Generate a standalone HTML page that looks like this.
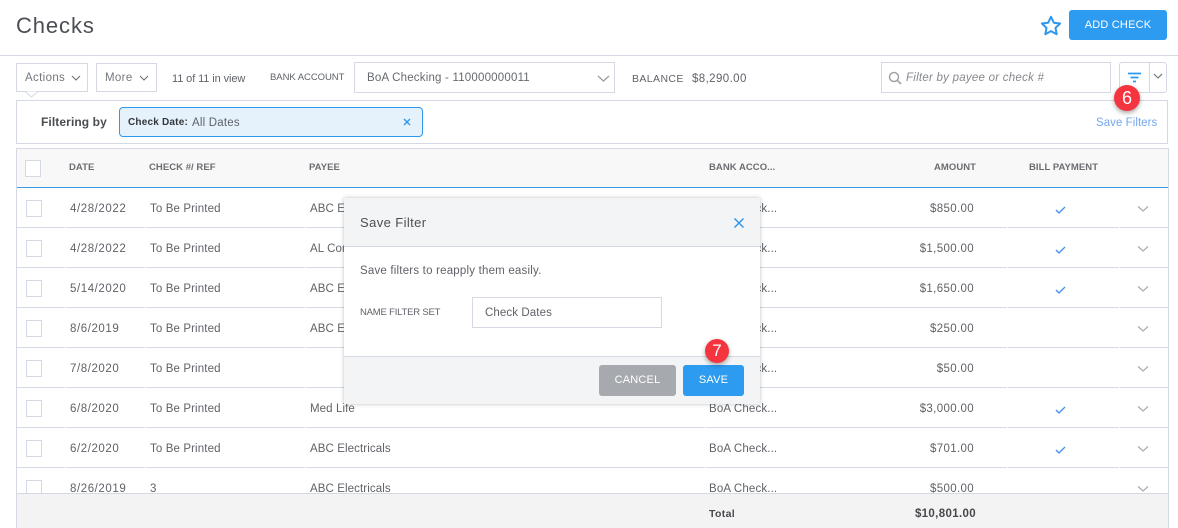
<!DOCTYPE html>
<html><head><meta charset="utf-8"><style>
html,body{margin:0;padding:0;background:#fff}
#p{position:relative;width:1178px;height:528px;overflow:hidden;background:#fff;font-family:"Liberation Sans",sans-serif;font-size:11.5px;letter-spacing:.12px;color:#5f6268}
#p div,#p span.t,#p svg{position:absolute}
.t{position:absolute;white-space:nowrap;line-height:14px}
.b{box-sizing:border-box;border:1px solid #d4d9e3;background:#fff}
.h{font-weight:bold;font-size:9.5px;color:#6b6d72;letter-spacing:.05px}
.r{text-align:right}
.d{letter-spacing:.57px}
.a{letter-spacing:.35px;text-align:right;left:874px;width:100px}
.k{left:709px;letter-spacing:.15px}
.p{left:310px;letter-spacing:.1px}
.l{left:17px;width:1151px;height:1px;background:#d6dae5}
.g{top:188px;width:1px;height:305px;background:#fff}
.c{left:26px;width:16px;height:17px;box-sizing:border-box;border:1px solid #d4d9e3;background:#fff}
.btn{box-sizing:border-box;border-radius:3px;color:#fff;text-align:center;font-size:11px;letter-spacing:.2px}
</style></head><body><div id="p">
<span class="t" style="left:16px;top:13px;font-size:22px;line-height:26px;letter-spacing:.9px;color:#4b4e54">Checks</span>
<svg style="left:1040px;top:15px" width="22" height="21" viewBox="0 0 22 21"><path d="M11 1.800l2.800 5.900 6.300.8-4.600 4.400 1.200 6.300-5.700-3.100-5.700 3.100 1.200-6.300L1.900 8.500l6.300-.8z" fill="none" stroke="#2d98ee" stroke-width="2" stroke-linejoin="round"/></svg>
<div class="btn" style="left:1069px;top:10px;width:98px;height:30px;background:#2d9bf0;line-height:30px">ADD CHECK</div>
<div style="left:0;top:55px;width:1178px;height:1px;background:#d6dae3"></div>

<div class="b" style="left:16px;top:63px;width:72px;height:29px"></div>
<span class="t" style="left:25px;top:71px;color:#74777c;letter-spacing:.35px">Actions</span>
<svg style="left:71px;top:74px" width="10" height="8"><path d="M1 2l4 4 4-4" fill="none" stroke="#6d7076" stroke-width="1.100"/></svg>
<svg style="left:25px;top:91px" width="13" height="7"><path d="M0 .5l6.500 5.500L13 .5" fill="#fff" stroke="#d4d9e3"/></svg>
<div class="b" style="left:96px;top:63px;width:61px;height:29px"></div>
<span class="t" style="left:105px;top:71px;color:#74777c;letter-spacing:.35px">More</span>
<svg style="left:139px;top:74px" width="10" height="8"><path d="M1 2l4 4 4-4" fill="none" stroke="#6d7076" stroke-width="1.100"/></svg>
<span class="t" style="left:172px;top:72px;font-size:11px;letter-spacing:-.1px">11 of 11 in view</span>
<span class="t" style="left:270px;top:71px;font-size:9.5px;letter-spacing:-.05px">BANK ACCOUNT</span>
<div class="b" style="left:354px;top:62px;width:261px;height:31px"></div>
<span class="t" style="left:367px;top:71px;color:#66696f;letter-spacing:.2px">BoA Checking - 110000000011</span>
<svg style="left:597px;top:74px" width="13" height="9"><path d="M1 2l5.500 5L12 2" fill="none" stroke="#9a9da3" stroke-width="1.300"/></svg>
<span class="t" style="left:632px;top:72px;font-size:10.5px;letter-spacing:.4px">BALANCE</span>
<span class="t" style="left:692px;top:72px;letter-spacing:.4px">$8,290.00</span>
<div class="b" style="left:881px;top:62px;width:230px;height:31px"></div>
<svg style="left:888px;top:71px" width="14" height="14"><circle cx="6" cy="6" r="4.500" fill="none" stroke="#a0a3a8" stroke-width="1.500"/><path d="M9.500 9.500L13 13" stroke="#a0a3a8" stroke-width="1.600"/></svg>
<span class="t" style="left:906px;top:71px;font-style:italic;color:#85888d;letter-spacing:.25px">Filter by payee or check #</span>
<div class="b" style="left:1119px;top:62px;width:48px;height:31px;border-radius:3px"></div>
<div style="left:1149px;top:63px;width:1px;height:29px;background:#d4d9e3"></div>
<svg style="left:1128px;top:72px" width="13" height="11"><path d="M0 1.500h13M2.500 5.500h8M5 9.500h3" stroke="#2d98ee" stroke-width="1.700"/></svg>
<svg style="left:1153px;top:73px" width="10" height="7"><path d="M1 1l4 4 4-4" fill="none" stroke="#6d7076" stroke-width="1.100"/></svg>

<div class="b" style="left:16px;top:100px;width:1152px;height:44px"></div>
<span class="t" style="left:41px;top:115px;font-weight:bold;font-size:12px;color:#4a4d52;letter-spacing:.1px">Filtering by</span>
<div style="left:119px;top:107px;width:304px;height:30px;box-sizing:border-box;border:1px solid #2d98ee;border-radius:4px;background:#e5f2fc"></div>
<span class="t" style="left:128px;top:116px;font-weight:bold;font-size:10px;color:#33363b;letter-spacing:.2px">Check Date:</span>
<span class="t" style="left:192px;top:116px;letter-spacing:.2px">All Dates</span>
<svg style="left:403px;top:118px" width="8" height="8"><path d="M1 1l6 6M7 1L1 7" stroke="#2d98ee" stroke-width="1.400"/></svg>
<span class="t" style="left:1096px;top:116px;color:#74a7ee;letter-spacing:.05px">Save Filters</span>

<div style="left:16px;top:148px;width:1153px;height:380px;box-sizing:border-box;border:1px solid #d4d9e3;border-bottom:0;background:#fff"></div>
<div style="left:17px;top:149px;width:1151px;height:38px;background:#f8f8f8"></div>
<div style="left:17px;top:187px;width:1151px;height:1px;background:#3a9bea"></div>
<div class="c" style="left:25px;top:160px"></div>
<span class="t h" style="left:69px;top:161px">DATE</span>
<span class="t h" style="left:149px;top:161px">CHECK #/ REF</span>
<span class="t h" style="left:309px;top:161px">PAYEE</span>
<span class="t h" style="left:709px;top:161px">BANK ACCO...</span>
<span class="t h r" style="left:876px;width:100px;top:161px">AMOUNT</span>
<span class="t h" style="left:1029px;top:161px">BILL PAYMENT</span>

<div class="l" style="top:227px"></div><div class="l" style="top:267px"></div><div class="l" style="top:307px"></div><div class="l" style="top:347px"></div><div class="l" style="top:387px"></div><div class="l" style="top:427px"></div><div class="l" style="top:467px"></div>
<div class="g" style="left:65px"></div><div class="g" style="left:145px"></div><div class="g" style="left:305px"></div><div class="g" style="left:705px"></div><div class="g" style="left:1007px"></div><div class="g" style="left:1119px"></div>

<div class="c" style="top:200px"></div><div class="c" style="top:240px"></div><div class="c" style="top:280px"></div><div class="c" style="top:320px"></div><div class="c" style="top:360px"></div><div class="c" style="top:400px"></div><div class="c" style="top:440px"></div><div class="c" style="top:480px"></div>

<span class="t d" style="left:70px;top:202px">4/28/2022</span><span class="t" style="left:150px;top:202px">To Be Printed</span><span class="t p" style="top:202px">ABC Electricals</span><span class="t k" style="top:202px">BoA Check...</span><span class="t a" style="top:202px">$850.00</span>
<span class="t d" style="left:70px;top:242px">4/28/2022</span><span class="t" style="left:150px;top:242px">To Be Printed</span><span class="t p" style="top:242px">AL Constructions</span><span class="t k" style="top:242px">BoA Check...</span><span class="t a" style="top:242px">$1,500.00</span>
<span class="t d" style="left:70px;top:282px">5/14/2020</span><span class="t" style="left:150px;top:282px">To Be Printed</span><span class="t p" style="top:282px">ABC Electricals</span><span class="t k" style="top:282px">BoA Check...</span><span class="t a" style="top:282px">$1,650.00</span>
<span class="t d" style="left:70px;top:322px">8/6/2019</span><span class="t" style="left:150px;top:322px">To Be Printed</span><span class="t p" style="top:322px">ABC Electricals</span><span class="t k" style="top:322px">BoA Check...</span><span class="t a" style="top:322px">$250.00</span>
<span class="t d" style="left:70px;top:362px">7/8/2020</span><span class="t" style="left:150px;top:362px">To Be Printed</span><span class="t k" style="top:362px">BoA Check...</span><span class="t a" style="top:362px">$50.00</span>
<span class="t d" style="left:70px;top:402px">6/8/2020</span><span class="t" style="left:150px;top:402px">To Be Printed</span><span class="t p" style="top:402px">Med Life</span><span class="t k" style="top:402px">BoA Check...</span><span class="t a" style="top:402px">$3,000.00</span>
<span class="t d" style="left:70px;top:442px">6/2/2020</span><span class="t" style="left:150px;top:442px">To Be Printed</span><span class="t p" style="top:442px">ABC Electricals</span><span class="t k" style="top:442px">BoA Check...</span><span class="t a" style="top:442px">$701.00</span>
<span class="t d" style="left:70px;top:482px">8/26/2019</span><span class="t" style="left:150px;top:482px">3</span><span class="t p" style="top:482px">ABC Electricals</span><span class="t k" style="top:482px">BoA Check...</span><span class="t a" style="top:482px">$500.00</span>

<svg style="left:1055px;top:205px" width="11" height="9"><path d="M1 5l3 3 6-6" fill="none" stroke="#3f8fe8" stroke-width="1.300"/></svg>
<svg style="left:1055px;top:245px" width="11" height="9"><path d="M1 5l3 3 6-6" fill="none" stroke="#3f8fe8" stroke-width="1.300"/></svg>
<svg style="left:1055px;top:285px" width="11" height="9"><path d="M1 5l3 3 6-6" fill="none" stroke="#3f8fe8" stroke-width="1.300"/></svg>
<svg style="left:1055px;top:405px" width="11" height="9"><path d="M1 5l3 3 6-6" fill="none" stroke="#3f8fe8" stroke-width="1.300"/></svg>
<svg style="left:1055px;top:445px" width="11" height="9"><path d="M1 5l3 3 6-6" fill="none" stroke="#3f8fe8" stroke-width="1.300"/></svg>
<svg style="left:1137px;top:205px" width="12" height="8"><path d="M1 1.500l5 4.500 5-4.500" fill="none" stroke="#a6a9ae" stroke-width="1.200"/></svg>
<svg style="left:1137px;top:245px" width="12" height="8"><path d="M1 1.500l5 4.500 5-4.500" fill="none" stroke="#a6a9ae" stroke-width="1.200"/></svg>
<svg style="left:1137px;top:285px" width="12" height="8"><path d="M1 1.500l5 4.500 5-4.500" fill="none" stroke="#a6a9ae" stroke-width="1.200"/></svg>
<svg style="left:1137px;top:325px" width="12" height="8"><path d="M1 1.500l5 4.500 5-4.500" fill="none" stroke="#a6a9ae" stroke-width="1.200"/></svg>
<svg style="left:1137px;top:365px" width="12" height="8"><path d="M1 1.500l5 4.500 5-4.500" fill="none" stroke="#a6a9ae" stroke-width="1.200"/></svg>
<svg style="left:1137px;top:405px" width="12" height="8"><path d="M1 1.500l5 4.500 5-4.500" fill="none" stroke="#a6a9ae" stroke-width="1.200"/></svg>
<svg style="left:1137px;top:445px" width="12" height="8"><path d="M1 1.500l5 4.500 5-4.500" fill="none" stroke="#a6a9ae" stroke-width="1.200"/></svg>
<svg style="left:1137px;top:485px" width="12" height="8"><path d="M1 1.500l5 4.500 5-4.500" fill="none" stroke="#a6a9ae" stroke-width="1.200"/></svg>

<div style="left:17px;top:493px;width:1151px;height:35px;background:#f3f3f3;border-top:1px solid #d4d9e3;box-sizing:border-box"></div>
<span class="t" style="left:709px;top:507px;font-weight:bold;font-size:10.5px;color:#45484d;letter-spacing:.35px">Total</span>
<span class="t r" style="left:876px;width:100px;top:507px;font-weight:bold;color:#45484d;letter-spacing:.35px">$10,801.00</span>

<div style="left:344px;top:198px;width:416px;height:206px;background:#fff;box-shadow:0 0 4px rgba(0,0,0,.25)"></div>
<div style="left:344px;top:198px;width:416px;height:49px;background:#f3f4f6;border-bottom:1px solid #d4d9e3;box-sizing:border-box"></div>
<span class="t" style="left:360px;top:216px;font-size:13px;color:#4b4e54;letter-spacing:.4px">Save Filter</span>
<svg style="left:733px;top:217px" width="12" height="12"><path d="M1.500 1.500l9 9M10.500 1.500l-9 9" stroke="#2d98ee" stroke-width="1.500"/></svg>
<span class="t" style="left:360px;top:264px;letter-spacing:.2px">Save filters to reapply them easily.</span>
<span class="t" style="left:360px;top:306px;font-size:9.5px;letter-spacing:-.2px">NAME FILTER SET</span>
<div class="b" style="left:472px;top:297px;width:190px;height:31px"></div>
<span class="t" style="left:485px;top:306px;letter-spacing:.1px">Check Dates</span>
<div style="left:344px;top:356px;width:416px;height:48px;background:#f3f4f6;border-top:1px solid #d4d9e3;box-sizing:border-box"></div>
<div class="btn" style="left:599px;top:365px;width:77px;height:31px;background:#a6a9ad;line-height:31px">CANCEL</div>
<div class="btn" style="left:683px;top:365px;width:61px;height:31px;background:#2d9bf0;line-height:31px">SAVE</div>

<div style="left:1114px;top:85px;width:26px;height:26px;border-radius:50%;background:#f4343f;box-shadow:0 2px 5px rgba(0,0,0,.35)"></div>
<span class="t" style="left:1114px;top:89px;width:26px;text-align:center;color:#fff;font-size:18px;line-height:18px;letter-spacing:0">6</span>
<div style="left:705px;top:339px;width:24px;height:24px;border-radius:50%;background:#f4343f;box-shadow:0 2px 5px rgba(0,0,0,.35)"></div>
<span class="t" style="left:705px;top:342px;width:24px;text-align:center;color:#fff;font-size:17px;line-height:18px;letter-spacing:0">7</span>
</div></body></html>
